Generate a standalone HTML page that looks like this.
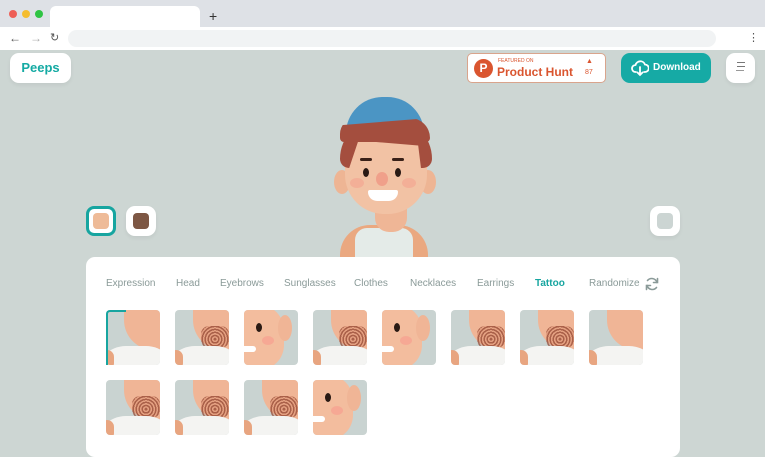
<!DOCTYPE html>
<html><head><meta charset="utf-8"><style>
*{margin:0;padding:0;box-sizing:border-box}
body{width:765px;height:446px;overflow:hidden;background:#cdd6d3;font-family:"Liberation Sans",sans-serif;position:relative}
.abs{position:absolute}
.tabbar{left:0;top:0;width:765px;height:27px;background:#dee1e6}
.tab{left:50px;top:6px;width:150px;height:21px;background:#fff;border-radius:6px 6px 0 0}
.dot{width:8px;height:8px;border-radius:50%;top:10px}
.toolbar{left:0;top:27px;width:765px;height:23px;background:#fff}
.url{left:68px;top:30px;width:648px;height:17px;background:#f1f3f4;border-radius:9px}
.btn{background:#fff;border-radius:9px;box-shadow:0 2px 4px rgba(0,0,0,.06)}
.tiles div.t{position:absolute;width:54px;height:55px;border-radius:4px;overflow:hidden;background:#c9d3d1}
.neck .a{position:absolute;left:18px;top:-10px;width:50px;height:50px;background:#f0b596;border-radius:0 0 20px 30px}
.neck .b{position:absolute;left:-10px;top:36px;width:80px;height:30px;background:#f4f4f2;border-radius:40px 40px 0 0}
.neck .c{position:absolute;left:-6px;top:40px;width:14px;height:20px;background:#e8a580;border-radius:8px}
.neck .tt{position:absolute;left:26px;top:16px;width:28px;height:22px;background:repeating-radial-gradient(circle at 50% 60%,rgba(140,60,40,.7) 0 1.5px,rgba(200,110,80,.3) 1.5px 3px);border-radius:8px}
.face .a{position:absolute;left:-5px;top:-5px;width:45px;height:65px;background:#f3bd9e;border-radius:0 25px 25px 0}
.face .e{position:absolute;left:34px;top:5px;width:14px;height:26px;background:#f0b596;border-radius:50%}
.face .ey{position:absolute;left:12px;top:13px;width:6px;height:9px;background:#2a1a14;border-radius:50%}
.face .m{position:absolute;left:0;top:36px;width:12px;height:6px;background:#fff;border-radius:0 4px 4px 0}
.face .bl{position:absolute;left:18px;top:26px;width:12px;height:9px;background:#f7a090;border-radius:50%;opacity:.7}
</style></head><body>
<div class="abs tabbar"></div>
<div class="abs dot" style="left:9px;background:#ee5f57"></div>
<div class="abs dot" style="left:22px;background:#f5bd2f"></div>
<div class="abs dot" style="left:35px;background:#2fc443"></div>
<div class="abs tab"></div>
<div class="abs" style="left:209px;top:8px;font-size:14px;color:#333">+</div>
<div class="abs toolbar"></div>
<div class="abs" style="left:9px;top:31px;font-size:12px;color:#555">←</div>
<div class="abs" style="left:30px;top:31px;font-size:12px;color:#aaa">→</div>
<div class="abs" style="left:50px;top:31px;font-size:11px;color:#555">↻</div>
<div class="abs url"></div>
<div class="abs" style="left:748px;top:31px;font-size:11px;color:#555">⋮</div>

<div class="abs btn" style="left:10px;top:53px;width:61px;height:30px;color:#14aaa3;font-weight:bold;font-size:13px;line-height:30px;text-align:center">Peeps</div>
<div class="abs" style="left:467px;top:53px;width:139px;height:30px;background:#fff;border:1px solid #d9a48c;border-radius:5px">
 <div class="abs" style="left:6px;top:5px;width:19px;height:19px;border-radius:50%;background:#da552f;color:#fff;font-weight:bold;font-size:12px;line-height:19px;text-align:center">P</div>
 <div class="abs" style="left:30px;top:4px;font-size:5px;color:#da552f">FEATURED ON</div>
 <div class="abs" style="left:29px;top:11px;font-size:12px;font-weight:bold;color:#da552f">Product Hunt</div>
 <div class="abs" style="left:118px;top:4px;font-size:7px;color:#da552f">▲</div>
 <div class="abs" style="left:117px;top:15px;font-size:7px;color:#da552f">87</div>
</div>
<div class="abs" style="left:621px;top:53px;width:90px;height:30px;background:#16aaa5;border-radius:9px;color:#fff;font-weight:bold;font-size:10px;line-height:30px;padding-left:32px">Download</div>
<svg class="abs" style="left:631px;top:59px" width="18" height="18" viewBox="0 0 18 18" fill="none" stroke="#fff" stroke-width="1.8" stroke-linecap="round"><path d="M5 13H4.5a3.5 3.5 0 0 1 0-7A5 5 0 0 1 14 5.5a3.5 3.5 0 0 1 0 7.5h-1"/><path d="M9 8v8M6.5 13.5L9 16l2.5-2.5"/></svg>
<div class="abs btn" style="left:726px;top:53px;width:29px;height:30px"></div>
<div class="abs" style="left:737px;top:62px;width:8px;height:1px;background:#777;box-shadow:0 4px 0 #777,-1px 8px 0 #999"></div>

<!-- character -->
<div class="abs" style="left:340px;top:225px;width:88px;height:40px;background:#eaa880;border-radius:30px 30px 0 0"></div>
<div class="abs" style="left:355px;top:228px;width:58px;height:32px;background:#e4ebe8;border-radius:12px 12px 0 0"></div>
<div class="abs" style="left:375px;top:200px;width:32px;height:32px;background:#efb696;border-radius:0 0 14px 14px"></div>
<div class="abs" style="left:334px;top:170px;width:16px;height:24px;background:#eeb594;border-radius:50%"></div>
<div class="abs" style="left:420px;top:170px;width:16px;height:24px;background:#eeb594;border-radius:50%"></div>
<div class="abs" style="left:345px;top:132px;width:82px;height:82px;background:#f2c2a4;border-radius:40% 40% 48% 48%"></div>
<div class="abs" style="left:340px;top:118px;width:92px;height:50px;background:#a44e3e;border-radius:45px 45px 10px 10px;clip-path:polygon(0 0,100% 0,100% 100%,88% 100%,85% 55%,20% 45%,10% 100%,0 100%)"></div>
<div class="abs" style="left:346px;top:97px;width:78px;height:42px;background:#4b95c4;border-radius:40px 40px 6px 6px"></div>
<div class="abs" style="left:340px;top:118px;width:90px;height:24px;background:#a44e3e;border-radius:20px 25px 5px 5px;clip-path:polygon(0 30%,100% 0,100% 100%,0 100%)"></div>
<div class="abs" style="left:360px;top:158px;width:12px;height:3px;background:#3a2018;border-radius:2px"></div>
<div class="abs" style="left:392px;top:158px;width:12px;height:3px;background:#3a2018;border-radius:2px"></div>
<div class="abs" style="left:363px;top:168px;width:6px;height:9px;background:#2a1a14;border-radius:50%"></div>
<div class="abs" style="left:395px;top:168px;width:6px;height:9px;background:#2a1a14;border-radius:50%"></div>
<div class="abs" style="left:350px;top:178px;width:14px;height:10px;background:#f4a290;border-radius:50%;opacity:.6"></div>
<div class="abs" style="left:402px;top:178px;width:14px;height:10px;background:#f4a290;border-radius:50%;opacity:.6"></div>
<div class="abs" style="left:376px;top:172px;width:12px;height:14px;background:#f0a08a;border-radius:50%"></div>
<div class="abs" style="left:368px;top:190px;width:30px;height:11px;background:#fff;border-radius:3px 3px 14px 14px"></div>

<!-- swatches -->
<div class="abs" style="left:86px;top:206px;width:30px;height:30px;border:3px solid #17a5a0;border-radius:8px;background:#fff"></div>
<div class="abs" style="left:93px;top:213px;width:16px;height:16px;border-radius:4px;background:#eebb98"></div>
<div class="abs btn" style="left:126px;top:206px;width:30px;height:30px"></div>
<div class="abs" style="left:133px;top:213px;width:16px;height:16px;border-radius:4px;background:#7d5744"></div>
<div class="abs btn" style="left:650px;top:206px;width:30px;height:30px"></div>
<div class="abs" style="left:657px;top:213px;width:16px;height:16px;border-radius:4px;background:#ccd5d3"></div>

<!-- panel -->
<div class="abs" style="left:86px;top:257px;width:594px;height:200px;background:#fff;border-radius:9px"></div>
<div class="abs" style="top:278px;left:106px;font-size:10px;color:#8a9a98;white-space:nowrap">
<span style="position:absolute;left:0">Expression</span>
<span style="position:absolute;left:70px">Head</span>
<span style="position:absolute;left:114px">Eyebrows</span>
<span style="position:absolute;left:178px">Sunglasses</span>
<span style="position:absolute;left:248px">Clothes</span>
<span style="position:absolute;left:304px">Necklaces</span>
<span style="position:absolute;left:371px">Earrings</span>
<span style="position:absolute;left:429px;color:#17a5a0;font-weight:bold">Tattoo</span>
<span style="position:absolute;left:483px">Randomize</span>
</div>
<svg class="abs" style="left:644px;top:276px" width="16" height="16" viewBox="0 0 16 16" fill="none" stroke="#8a9a98" stroke-width="1.6" stroke-linecap="round"><path d="M13 6.5A5.5 5.5 0 0 0 3.5 4.5"/><path d="M3 9.5A5.5 5.5 0 0 0 12.5 11.5"/><path d="M13.5 2.5v4h-4M2.5 13.5v-4h4"/></svg>

<div class="tiles">
<div class="t neck" style="left:106px;top:310px"><div class="a"></div><div class="b"></div><div class="c"></div></div>
<div class="t neck" style="left:175px;top:310px"><div class="a"></div><div class="tt"></div><div class="b"></div><div class="c"></div></div>
<div class="t face" style="left:244px;top:310px"><div class="a"></div><div class="e"></div><div class="bl"></div><div class="ey"></div><div class="m"></div></div>
<div class="t neck" style="left:313px;top:310px"><div class="a"></div><div class="tt"></div><div class="b"></div><div class="c"></div></div>
<div class="t face" style="left:382px;top:310px"><div class="a"></div><div class="e"></div><div class="bl"></div><div class="ey"></div><div class="m"></div></div>
<div class="t neck" style="left:451px;top:310px"><div class="a"></div><div class="tt"></div><div class="b"></div><div class="c"></div></div>
<div class="t neck" style="left:520px;top:310px"><div class="a"></div><div class="tt"></div><div class="b"></div><div class="c"></div></div>
<div class="t neck" style="left:589px;top:310px"><div class="a"></div><div class="b"></div><div class="c"></div></div>
<div class="t neck" style="left:106px;top:380px"><div class="a"></div><div class="tt"></div><div class="b"></div><div class="c"></div></div>
<div class="t neck" style="left:175px;top:380px"><div class="a"></div><div class="tt"></div><div class="b"></div><div class="c"></div></div>
<div class="t neck" style="left:244px;top:380px"><div class="a"></div><div class="tt"></div><div class="b"></div><div class="c"></div></div>
<div class="t face" style="left:313px;top:380px"><div class="a"></div><div class="e"></div><div class="bl"></div><div class="ey"></div><div class="m"></div></div>
</div>
<div class="abs" style="left:106px;top:310px;width:20px;height:55px;border-left:2px solid #17a5a0;border-top:2px solid #17a5a0;border-radius:4px 0 0 0"></div>
</body></html>
